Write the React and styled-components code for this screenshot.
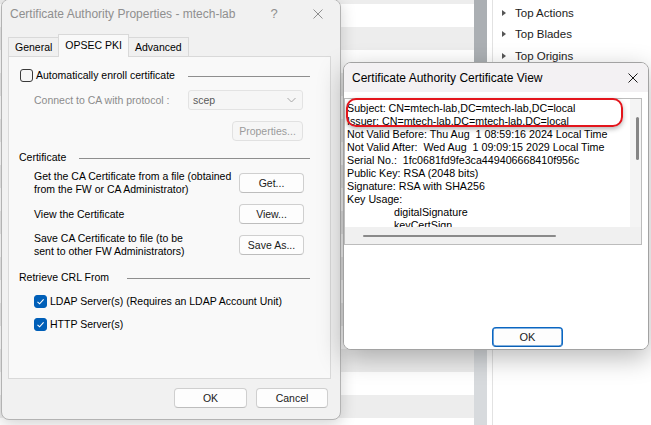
import React from 'react';
import styled, { createGlobalStyle } from 'styled-components';

const GlobalStyle = createGlobalStyle`
  html, body { margin: 0; padding: 0; }
  body {
    font-family: "Liberation Sans", Arial, sans-serif;
    overflow: hidden;
    background: #fff;
  }
`;

const Desktop = styled.div`
  position: relative;
  width: 651px;
  height: 425px;
  overflow: hidden;
  display: flex;
  background: #fff;
`;

/* background application */

const ListPane = styled.div`
  width: 474px;
  flex: none;
  display: flex;
  flex-direction: column;
`;

const ListRow = styled.div`
  flex: none;
  height: ${({ $h }) => $h || 23}px;
  background: ${({ $alt }) => ($alt ? '#ededed' : '#ffffff')};
`;

const ScrollTrack = styled.div`
  width: 13px;
  flex: none;
  background: #d7dadd;
`;

const ScrollThumb = styled.div`
  height: 210px;
  background: #abafb3;
`;

const SidePanel = styled.div`
  flex: 1;
  margin-left: 5px;
  border-left: 1px solid #e2e2e2;
  padding: 2px 0 0 9px;
`;

const SideItem = styled.div`
  height: 21.5px;
  display: flex;
  align-items: center;
  gap: 9px;
  font-size: 11.5px;
  color: #1b1b1b;
`;

const Caret = styled.span`
  width: 0;
  height: 0;
  border-left: 4px solid #555;
  border-top: 3px solid transparent;
  border-bottom: 3px solid transparent;
`;

/* windows */

const Window = styled.div`
  position: absolute;
  left: ${({ $x }) => $x}px;
  top: ${({ $y }) => $y}px;
  width: ${({ $w }) => $w}px;
  height: ${({ $h }) => $h}px;
  box-sizing: border-box;
  border: 1px solid ${({ $active }) => ($active ? '#a2a2a2' : '#b3b3b3')};
  border-radius: 8px;
  background: ${({ $bg }) => $bg};
  box-shadow: ${({ $active }) =>
    $active ? '0 8px 26px rgba(0,0,0,0.28)' : '0 4px 16px rgba(0,0,0,0.18)'};
  display: flex;
  flex-direction: column;
  overflow: hidden;
`;

const TitleBar = styled.div`
  flex: none;
  height: ${({ $h }) => $h}px;
  display: flex;
  align-items: center;
  padding-left: 8px;
  background: ${({ $bg }) => $bg};
  color: ${({ $active }) => ($active ? '#000' : '#8f8f8f')};
  font-size: 12px;
`;

const Title = styled.div`
  flex: 1;
  white-space: nowrap;
`;

const CtrlButton = styled.div`
  width: ${({ $w }) => $w}px;
  height: 100%;
  display: flex;
  align-items: center;
  justify-content: center;
  font-size: 13px;
`;

const CloseIcon = ({ color }) => (
  <svg width="10" height="10" viewBox="0 0 10 10">
    <path d="M0.5 0.5 L9.5 9.5 M9.5 0.5 L0.5 9.5" stroke={color} strokeWidth="1" fill="none" />
  </svg>
);

/* property sheet */

const SheetBody = styled.div`
  padding: 7px 9px 0 6px;
  display: flex;
  flex-direction: column;
`;

const TabStrip = styled.div`
  height: 22px;
  display: flex;
  align-items: flex-end;
`;

const Tab = styled.div`
  position: relative;
  box-sizing: border-box;
  height: ${({ $selected }) => ($selected ? 23 : 19)}px;
  margin-bottom: ${({ $selected }) => ($selected ? -1 : 0)}px;
  margin-left: -1px;
  z-index: ${({ $selected }) => ($selected ? 1 : 0)};
  padding: ${({ $selected }) => ($selected ? '4px 6px 0' : '3px 6px 0')};
  border: 1px solid #d9d9d9;
  border-bottom: none;
  background: ${({ $selected }) => ($selected ? '#f9f9f9' : '#f0f0f0')};
  font-size: 10.5px;
  color: #000;
  &:first-child { margin-left: 0; }
`;

const Panel = styled.div`
  box-sizing: border-box;
  height: 323px;
  border: 1px solid #d9d9d9;
  background: #f9f9f9;
  padding: 0 20px 0 10px;
  display: flex;
  flex-direction: column;
  font-size: 10.5px;
  color: #000;
`;

const Row = styled.div`
  display: flex;
  align-items: center;
  min-height: ${({ $h }) => $h || 14}px;
  margin-top: ${({ $mt }) => $mt}px;
  padding-left: ${({ $indent }) => $indent || 0}px;
`;

const Label = styled.div`
  line-height: 13px;
  color: ${({ $disabled }) => ($disabled ? '#8c8c8c' : '#000')};
  margin-left: ${({ $ml }) => $ml || 0}px;
  white-space: nowrap;
`;

const GroupLine = styled.div`
  height: 1px;
  background: #8e8e8e;
  margin-top: 2px;
  ${({ $w }) => ($w ? `width: ${$w}px; margin-left: auto;` : 'flex: 1;')}
  ${({ $ml }) => ($ml ? `margin-left: ${$ml}px;` : '')}
`;

const CheckBox = styled.span`
  box-sizing: border-box;
  width: 13px;
  height: 13px;
  margin-left: 1px;
  flex: none;
  border-radius: 3px;
  border: 1px solid ${({ $checked }) => ($checked ? '#005fb8' : '#3a3a3a')};
  background: ${({ $checked }) => ($checked ? '#005fb8' : '#f6f6f6')};
  display: flex;
  align-items: center;
  justify-content: center;
`;

const CheckMark = () => (
  <svg width="9" height="9" viewBox="0 0 9 9">
    <path d="M1.5 4.8 L3.6 6.8 L7.6 2.4" stroke="#fff" strokeWidth="1.1" fill="none" />
  </svg>
);

const Select = styled.div`
  box-sizing: border-box;
  width: 115px;
  height: 20px;
  margin-left: auto;
  margin-right: 7px;
  border: 1px solid #e3e3e3;
  border-radius: 3px;
  background: #f6f6f6;
  display: flex;
  align-items: center;
  justify-content: space-between;
  padding: 0 6px 0 4px;
  color: #5a5a5a;
`;

const Chevron = () => (
  <svg width="9" height="6" viewBox="0 0 9 6">
    <path d="M0.5 1 L4.5 5 L8.5 1" stroke="#a6a6a6" strokeWidth="1" fill="none" />
  </svg>
);

const PushButton = styled.div`
  box-sizing: border-box;
  flex: none;
  width: ${({ $w }) => $w}px;
  height: 20px;
  margin-left: ${({ $ml }) => ($ml === undefined ? 'auto' : `${$ml}px`)};
  margin-right: ${({ $mr }) => $mr || 0}px;
  border: 1px solid ${({ $default, $disabled }) =>
    $default ? '#0a66c2' : $disabled ? '#e1e1e1' : '#cfcfcf'};
  box-shadow: ${({ $default }) => ($default ? 'inset 0 0 0 0.6px #0a66c2' : 'none')};
  border-bottom-color: ${({ $default, $disabled }) =>
    $default ? '#0a5fb4' : $disabled ? '#e1e1e1' : '#bdbdbd'};
  border-radius: 4px;
  background: ${({ $disabled }) => ($disabled ? '#f6f6f6' : '#fdfdfd')};
  color: ${({ $disabled }) => ($disabled ? '#9b9b9b' : '#1a1a1a')};
  font-size: ${({ $fs }) => $fs || 10.5}px;
  display: flex;
  align-items: center;
  justify-content: center;
`;

const ButtonBar = styled.div`
  display: flex;
  justify-content: flex-end;
  gap: 9px;
  margin: 9px 3px 0 0;
`;

/* certificate view */

const ViewBody = styled.div`
  flex: 1;
  display: flex;
  flex-direction: column;
  background: #fff;
`;

const TextBox = styled.div`
  box-sizing: border-box;
  height: 147px;
  margin: 6px 6px 0 0;
  border: 1px solid #bcbcbc;
  display: grid;
  grid-template-columns: 1fr 11px;
  grid-template-rows: 1fr 17px;
`;

const TextArea = styled.div`
  padding: 2.5px 0 0 2px;
  overflow: hidden;
  font-size: 10.7px;
  line-height: 13px;
  color: #000;
`;

const CertLine = styled.div`
  white-space: pre;
  padding-left: ${({ $indent }) => $indent || 0}px;
`;

const VScroll = styled.div`
  background: #f4f4f4;
  display: flex;
  flex-direction: column;
  align-items: flex-end;
  padding-right: 2px;
`;

const VThumb = styled.div`
  width: 3px;
  height: 43px;
  margin-top: 18px;
  border-radius: 2px;
  background: #858585;
`;

const HScroll = styled.div`
  grid-column: 1 / 3;
  background: #f0f0f0;
  padding: 8px 0 0 18px;
`;

const HThumb = styled.div`
  width: 193px;
  height: 2px;
  border-radius: 1px;
  background: #8a8a8a;
`;

const Footer = styled.div`
  margin-top: auto;
  padding: 0 0 2px 148px;
  display: flex;
`;

const Highlight = styled.div`
  position: absolute;
  left: 2px;
  top: 35px;
  width: 277px;
  height: 29px;
  box-sizing: border-box;
  border: 2px solid #e3151c;
  border-radius: 10px;
  box-shadow: 0 2px 5px rgba(0, 0, 0, 0.3);
  pointer-events: none;
`;

const certLines = [
  { t: 'Subject: CN=mtech-lab,DC=mtech-lab,DC=local' },
  { t: 'Issuer: CN=mtech-lab,DC=mtech-lab,DC=local' },
  { t: 'Not Valid Before: Thu Aug  1 08:59:16 2024 Local Time' },
  { t: 'Not Valid After:  Wed Aug  1 09:09:15 2029 Local Time' },
  { t: 'Serial No.:  1fc0681fd9fe3ca449406668410f956c' },
  { t: 'Public Key: RSA (2048 bits)' },
  { t: 'Signature: RSA with SHA256' },
  { t: 'Key Usage:' },
  { t: 'digitalSignature', indent: 47 },
  { t: 'keyCertSign', indent: 47 },
];

const sideItems = ['Top Actions', 'Top Blades', 'Top Origins'];

export default function App() {
  const rows = [];
  for (let i = 0; i < 18; i++) rows.push(<ListRow key={i} $alt={i % 2 === 1} />);

  return (
    <>
      <GlobalStyle />
      <Desktop>
        <ListPane>
          <ListRow $h={4} $alt />
          {rows}
        </ListPane>
        <ScrollTrack>
          <ScrollThumb />
        </ScrollTrack>
        <SidePanel>
          {sideItems.map((s) => (
            <SideItem key={s}>
              <Caret />
              {s}
            </SideItem>
          ))}
        </SidePanel>

        <Window $x={1} $y={-1} $w={340} $h={421} $bg="#f1f1f1">
          <TitleBar $h={27} $bg="#f1f1f1">
            <Title>Certificate Authority Properties - mtech-lab</Title>
            <CtrlButton $w={44}>?</CtrlButton>
            <CtrlButton $w={44}>
              <CloseIcon color="#8f8f8f" />
            </CtrlButton>
          </TitleBar>
          <SheetBody>
            <TabStrip>
              <Tab>General</Tab>
              <Tab $selected>OPSEC PKI</Tab>
              <Tab>Advanced</Tab>
            </TabStrip>
            <Panel>
              <Row $mt={11}>
                <CheckBox />
                <Label $ml={3}>Automatically enroll certificate</Label>
                <GroupLine $w={122} />
              </Row>
              <Row $mt={8} $h={20} $indent={15}>
                <Label $disabled>Connect to CA with protocol :</Label>
                <Select>
                  scep
                  <Chevron />
                </Select>
              </Row>
              <Row $mt={11} $h={20}>
                <PushButton $w={71} $mr={7} $disabled>
                  Properties...
                </PushButton>
              </Row>

              <Row $mt={9}>
                <Label>Certificate</Label>
                <GroupLine $ml={13} />
              </Row>
              <Row $mt={6} $h={26} $indent={15}>
                <Label>
                  Get the CA Certificate from a file (obtained
                  <br />
                  from the FW or CA Administrator)
                </Label>
                <PushButton $w={65} $mr={6}>Get...</PushButton>
              </Row>
              <Row $mt={8} $h={20} $indent={15}>
                <Label>View the Certificate</Label>
                <PushButton $w={65} $mr={6}>View...</PushButton>
              </Row>
              <Row $mt={8} $h={26} $indent={15}>
                <Label>
                  Save CA Certificate to file (to be
                  <br />
                  sent to other FW Administrators)
                </Label>
                <PushButton $w={65} $mr={6}>Save As...</PushButton>
              </Row>

              <Row $mt={12}>
                <Label>Retrieve CRL From</Label>
                <GroupLine $ml={18} />
              </Row>
              <Row $mt={10} $indent={14}>
                <CheckBox $checked>
                  <CheckMark />
                </CheckBox>
                <Label $ml={3}>LDAP Server(s) (Requires an LDAP Account Unit)</Label>
              </Row>
              <Row $mt={9} $indent={14}>
                <CheckBox $checked>
                  <CheckMark />
                </CheckBox>
                <Label $ml={3}>HTTP Server(s)</Label>
              </Row>
            </Panel>
            <ButtonBar>
              <PushButton $w={73} $ml={0}>OK</PushButton>
              <PushButton $w={72} $ml={0}>Cancel</PushButton>
            </ButtonBar>
          </SheetBody>
        </Window>

        <Window $x={343} $y={62} $w={306} $h={288} $bg="#ffffff" $active>
          <TitleBar $h={29} $bg="#f3f1f3" $active>
            <Title>Certificate Authority Certificate View</Title>
            <CtrlButton $w={30}>
              <CloseIcon color="#1a1a1a" />
            </CtrlButton>
          </TitleBar>
          <ViewBody>
            <TextBox>
              <TextArea>
                {certLines.map((l) => (
                  <CertLine key={l.t} $indent={l.indent}>
                    {l.t}
                  </CertLine>
                ))}
              </TextArea>
              <VScroll>
                <VThumb />
              </VScroll>
              <HScroll>
                <HThumb />
              </HScroll>
            </TextBox>
            <Footer>
              <PushButton $w={71} $ml={0} $default $fs={11}>
                OK
              </PushButton>
            </Footer>
          </ViewBody>
          <Highlight />
        </Window>
      </Desktop>
    </>
  );
}
